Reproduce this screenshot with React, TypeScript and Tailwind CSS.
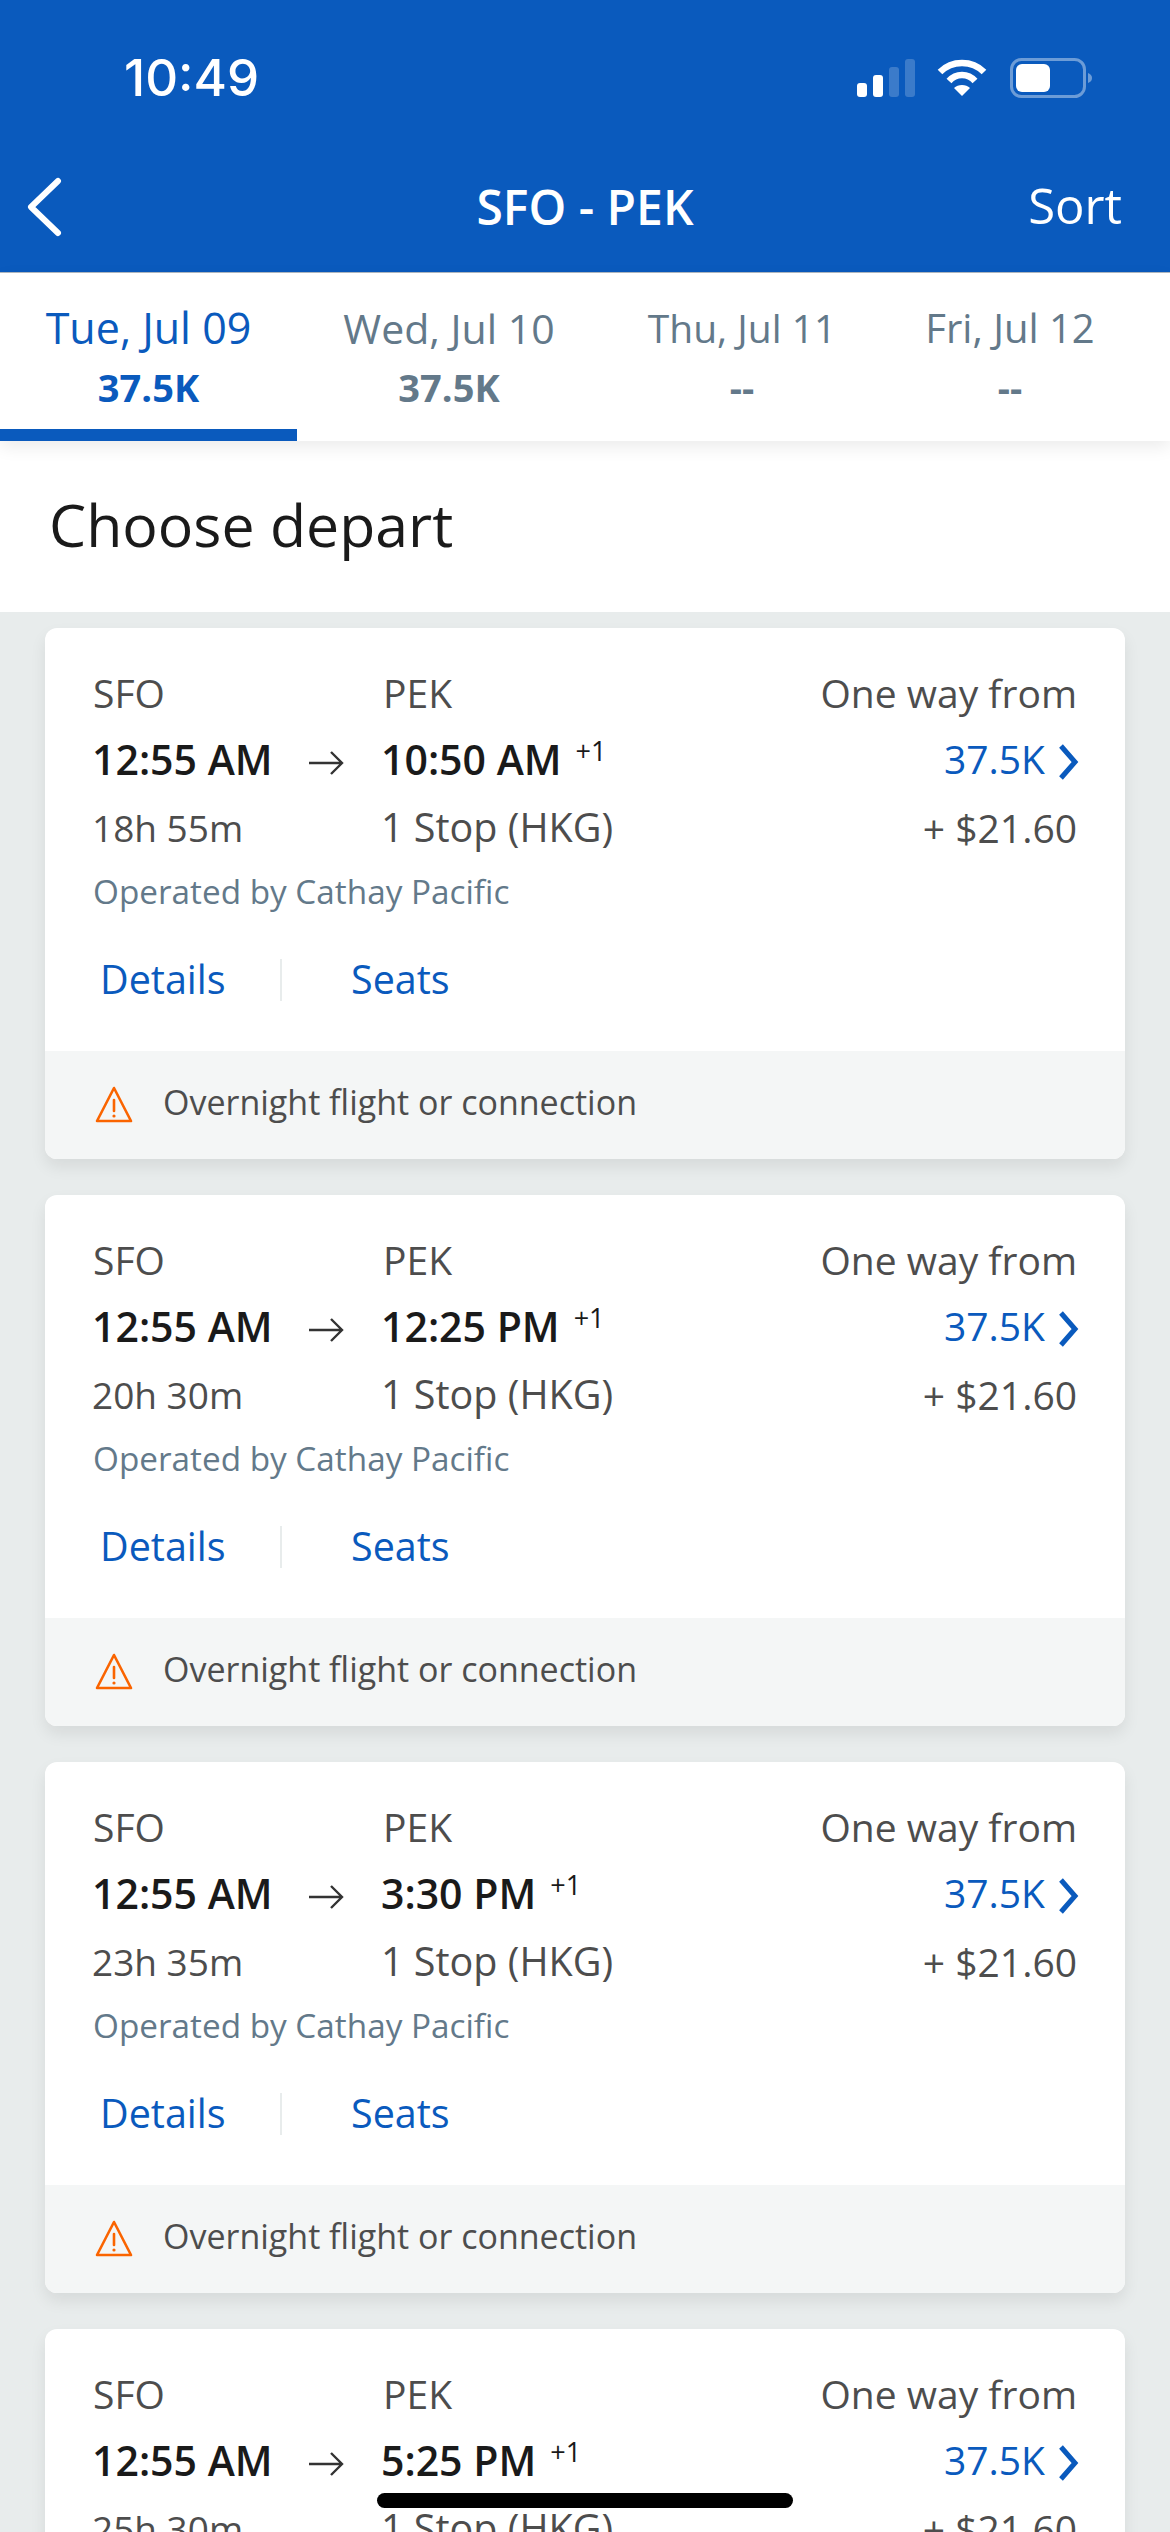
const DATES = [
  { label: 'Tue, Jul 09', price: '37.5K', width: 'w-[297px]', size: 'text-[43px]', active: true },
  { label: 'Wed, Jul 10', price: '37.5K', width: 'w-[304px]', size: 'text-[41px]', active: false },
  { label: 'Thu, Jul 11', price: '--', width: 'w-[282px]', size: 'text-[39px]', active: false },
  { label: 'Fri, Jul 12', price: '--', width: 'w-[254px]', size: 'text-[40px]', active: false },
];

const FLIGHTS = [
  { arrive: '10:50 AM', duration: '18h 55m' },
  { arrive: '12:25 PM', duration: '20h 30m' },
  { arrive: '3:30 PM', duration: '23h 35m' },
  { arrive: '5:25 PM', duration: '25h 30m' },
];

function StatusIcons() {
  return (
    <div className="flex items-center gap-[22px]">
      <svg width="58" height="38" viewBox="0 0 58 38" fill="white">
        <rect x="0" y="24" width="10" height="14" rx="3" />
        <rect x="16" y="16" width="10" height="22" rx="3" />
        <rect x="32" y="8" width="10" height="30" rx="3" opacity="0.2" />
        <rect x="48" y="0" width="10" height="38" rx="3" opacity="0.2" />
      </svg>
      <svg width="50" height="38" viewBox="0 0 50 38" fill="none" stroke="white" strokeWidth="6.5">
        <path d="M3 13 C15 1 35 1 47 13" />
        <path d="M12 22 C19 14 31 14 38 22" />
        <path d="M25 37 L17 29 C21 25 29 25 33 29 Z" fill="white" stroke="none" />
      </svg>
      <svg width="82" height="40" viewBox="0 0 82 40" fill="none" className="ml-[1px]">
        <rect x="1.5" y="1.5" width="73" height="37" rx="10" stroke="white" strokeOpacity="0.4" strokeWidth="3" />
        <rect x="6" y="6" width="34" height="28" rx="6" fill="white" />
        <path d="M78 15 C81 16 82 18 82 20 C82 22 81 24 78 25 Z" fill="white" fillOpacity="0.4" />
      </svg>
    </div>
  );
}

function WarningIcon() {
  return (
    <svg width="38" height="38" viewBox="0 0 38 38" fill="none" stroke="#fa6400" strokeWidth="2.6" strokeLinejoin="round">
      <path d="M19 2 L36 35 H2 Z" />
      <path d="M19 14 V25" strokeLinecap="round" />
      <circle cx="19" cy="30" r="1.6" fill="#fa6400" stroke="none" />
    </svg>
  );
}

function FlightCard({ arrive, duration }: { arrive: string; duration: string }) {
  return (
    <div className="bg-white rounded-[12px] shadow-[0_8px_16px_rgba(0,0,0,0.08)] overflow-hidden h-[531px] shrink-0">
      <div className="h-[423px] pt-[35px] pl-[47px] pr-[48px]">
        <div className="flex items-center h-[60px] text-[39px] text-[#4d4d4d]">
          <div className="w-[290px] pl-[1px]">SFO</div>
          <div className="flex-1 pl-[1px]">PEK</div>
          <div>One way from</div>
        </div>
        <div className="flex items-center h-[73px] text-[41px] text-[#1a1a1a]">
          <div className="w-[216px] font-semibold whitespace-nowrap">12:55 AM</div>
          <svg width="36" height="26" viewBox="0 0 36 26" fill="none" stroke="#333" strokeWidth="2.4" className="mr-[37px] mt-[6px]">
            <path d="M1 13 H34 M23 2 L34 13 L23 24" />
          </svg>
          <div className="flex-1 flex items-start">
            <span className="font-semibold whitespace-nowrap">{arrive}</span>
            <span className="text-[27px] ml-[14px] mt-[2px] font-medium">+1</span>
          </div>
          <div className="flex items-center text-[39px] text-[#0a5abd] font-medium">
            37.5K
            <svg width="22" height="38" viewBox="0 0 22 38" fill="none" stroke="#0a5abd" strokeWidth="5" className="ml-[12px] -mr-[2px] mt-[4px]">
              <path d="M4 3 L18 19 L4 35" />
            </svg>
          </div>
        </div>
        <div className="flex items-center h-[64px] text-[39px] text-[#4d4d4d]">
          <div className="w-[289px] text-[37px]">{duration}</div>
          <div className="flex-1 text-[39.5px]">1 Stop (HKG)</div>
          <div>+ $21.60</div>
        </div>
        <div className="flex items-center h-[63px] text-[33.3px] text-[#63798a] pl-[1px]">Operated by Cathay Pacific</div>
        <div className="flex items-center h-[64px] mt-[25px] text-[39.5px] text-[#0a5abd]">
          <div className="ml-[8px] w-[180px]">Details</div>
          <div className="w-[2px] h-[42px] bg-[#e8ecec]"></div>
          <div className="ml-[69px]">Seats</div>
        </div>
      </div>
      <div className="h-[108px] bg-[#f4f6f6] flex items-center pl-[50px] gap-[30px] text-[34px] text-[#4d4d4d]">
        <WarningIcon />
        <span className="-mt-[6px]">Overnight flight or connection</span>
      </div>
    </div>
  );
}

export default function App() {
  return (
    <div className="w-[1170px] h-[2532px] overflow-hidden relative bg-[#e8ecec] font-['Open_Sans',sans-serif]">
      {/* Header */}
      <div className="bg-[#0a5abd] h-[273px] text-white border-b border-[#b0b8c0]">
        <div className="h-[157px] pt-[44px] pl-[124px] pr-[78px] flex items-start justify-between">
          <div className="text-[51px] leading-[68px] font-medium font-['Inter',sans-serif]">10:49</div>
          <div className="mt-[14px]">
            <StatusIcons />
          </div>
        </div>
        <div className="flex items-center justify-between h-[100px] pr-[48px] pl-[26px] relative">
          <svg width="36" height="60" viewBox="0 0 36 60" fill="none" stroke="white" strokeWidth="6" strokeLinecap="round" strokeLinejoin="round">
            <path d="M32 4 L5 30 L32 56" />
          </svg>
          <div className="absolute left-0 right-0 text-center text-[48px] font-semibold">SFO - PEK</div>
          <div className="text-[49px] -mt-[2px]">Sort</div>
        </div>
      </div>

      {/* Date tabs */}
      <div className="relative z-10 bg-white h-[168px] shadow-[0_6px_16px_rgba(0,0,0,0.08)] flex">
        {DATES.map((d) => (
          <div key={d.label} className={`${d.width} flex flex-col items-center pt-[25px] ${d.active ? 'border-b-[12px] border-[#0a5abd] text-[#0a5abd]' : 'text-[#63798a]'}`}>
            <div className={`${d.size} leading-[60px] whitespace-nowrap`}>{d.label}</div>
            <div className="text-[38px] leading-[58px] font-bold">{d.price}</div>
          </div>
        ))}
      </div>

      {/* Title */}
      <div className="bg-white h-[171px] flex items-center pl-[49px] text-[59px] text-[#1a1a1a] pb-[4px]">
        Choose depart
      </div>

      {/* Cards */}
      <div className="px-[45px] pt-[16px] flex flex-col gap-[36px]">
        {FLIGHTS.map((f) => (
          <FlightCard key={f.arrive} arrive={f.arrive} duration={f.duration} />
        ))}
      </div>

      {/* Home indicator */}
      <div className="absolute left-[377px] top-[2493px] w-[416px] h-[15px] rounded-full bg-black"></div>
    </div>
  );
}
